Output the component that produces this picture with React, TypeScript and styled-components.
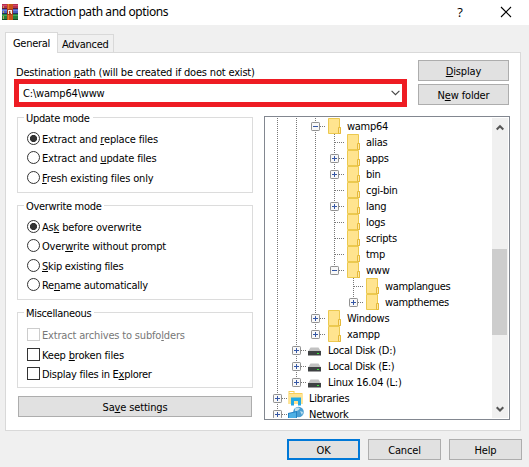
import React from 'react';
import styled, { createGlobalStyle, css } from 'styled-components';

const Global = createGlobalStyle`
  *, *::before, *::after { box-sizing: border-box; }
  body { margin: 0; overflow: hidden; background: #f0f0f0; }
`;

const Dialog = styled.div`
  width: 529px;
  height: 467px;
  display: flex;
  flex-direction: column;
  background: #f0f0f0;
  color: #000;
  font: 11px/13px 'DejaVu Sans Condensed', 'DejaVu Sans', sans-serif;
  letter-spacing: -0.18px;
  white-space: pre;
`;

const TitleBar = styled.header`
  height: 25px;
  flex: none;
  display: flex;
  align-items: center;
  padding: 0 17px 1px 2px;
  background: #fff;
`;

const Title = styled.h1`
  flex: 1;
  margin: 0 0 0 5px;
  font: 12px/16px 'Noto Sans', 'Open Sans', sans-serif;
  letter-spacing: -0.4px;
`;

const HelpMark = styled.span`
  width: 10px;
  margin-right: 35px;
  text-align: center;
  font: 13px/16px 'Open Sans', sans-serif;
`;

const Tabs = styled.nav`
  height: 27px;
  flex: none;
  display: flex;
  align-items: flex-end;
  padding-left: 5px;
`;

const Tab = styled.div<{ $active?: boolean }>`
  display: flex;
  border: 1px solid #d9d9d9;
  border-bottom: 0;
  letter-spacing: -0.3px;
  ${p =>
    p.$active
      ? css`
          width: 53px;
          height: 21px;
          margin-bottom: -1px;
          padding: 4px 0 0 7px;
          background: #fff;
          z-index: 1;
        `
      : css`
          width: 56px;
          height: 18px;
          padding: 3px 0 0 4px;
          border-left: 0;
        `}
`;

const Panel = styled.main`
  width: 516px;
  height: 379px;
  flex: none;
  display: flex;
  flex-direction: column;
  margin-left: 5px;
  padding: 8px 10px 0 8px;
  background: #fff;
  border: 1px solid #d9d9d9;
`;

const PathArea = styled.section`
  display: flex;
  justify-content: space-between;
  height: 55px;
  flex: none;
`;

const PathField = styled.div`
  width: 393px;
  padding-top: 5px;
`;

const PathLabel = styled.div`
  height: 13px;
  margin-left: 2px;
`;

const Combo = styled.div`
  height: 28px;
  display: flex;
  align-items: center;
  justify-content: space-between;
  padding: 0 2px 0 4px;
  border: 5px solid #ee1c23;
`;

const SideButtons = styled.div`
  display: flex;
  flex-direction: column;
  gap: 3px;
  width: 91px;
  margin: -1px 1px 0 0;
`;

const Button = styled.button<{ $primary?: boolean }>`
  height: 21px;
  display: flex;
  justify-content: center;
  align-items: center;
  padding: 1px 0 0;
  background: #e1e1e1;
  border: ${p => (p.$primary ? '2px solid #0078d7' : '1px solid #adadad')};
  font: inherit;
  color: inherit;
  letter-spacing: -0.15px;
`;

const Columns = styled.div`
  display: flex;
  justify-content: space-between;
  align-items: flex-start;
  padding-left: 3px;
`;

const Options = styled.div`
  width: 236px;
  display: flex;
  flex-direction: column;
  margin-top: -5px;
`;

const Group = styled.fieldset<{ $height: number }>`
  width: 236px;
  height: ${p => p.$height}px;
  min-width: 0;
  display: flex;
  flex-direction: column;
  margin: 0 0 6px;
  padding: 0 0 0 9px;
  border: 1px solid #dcdcdc;
`;

const Legend = styled.legend`
  height: 13px;
  margin-left: -3px;
  padding: 0 3px 0 2px;
  line-height: 15px;
  letter-spacing: -0.32px;
`;

const Choice = styled.label<{ $gap: number; $disabled?: boolean }>`
  height: 13px;
  display: flex;
  align-items: flex-start;
  gap: 2px;
  margin-top: ${p => p.$gap}px;
  color: ${p => (p.$disabled ? '#777' : '#000')};
`;

const ChoiceText = styled.span<{ $tight?: boolean }>`
  line-height: 15px;
  letter-spacing: ${p => (p.$tight ? -0.27 : -0.17)}px;
`;

const Radio = styled.span<{ $on?: boolean }>`
  width: 13px;
  height: 13px;
  flex: none;
  border: 1px solid #333;
  border-radius: 50%;
  background: ${p => (p.$on ? 'radial-gradient(circle, #333 3.2px, #fff 3.9px)' : '#fff')};
`;

const Check = styled.span<{ $disabled?: boolean }>`
  width: 13px;
  height: 13px;
  flex: none;
  border: 1px solid ${p => (p.$disabled ? '#ccc' : '#333')};
`;

const SaveButton = styled(Button)`
  width: 234px;
  margin: 2px 0 0 1px;
`;

const TreeBox = styled.div`
  width: 246px;
  height: 304px;
  display: flex;
  justify-content: space-between;
  padding: 1px;
  border: 1px solid #828790;
`;

const TreeList = styled.div`
  flex: 1;
  height: 300px;
  overflow: hidden;
  padding-left: 2px;
`;

const TreeRow = styled.div`
  height: 16px;
  display: flex;
  align-items: flex-start;
`;

const RowLabel = styled.span<{ $tight?: boolean }>`
  height: 12px;
  margin: 2px 0 0 3px;
  line-height: 13px;
  letter-spacing: ${p => (p.$tight ? -0.34 : -0.27)}px;
`;

const Scrollbar = styled.div`
  width: 16px;
  height: 300px;
  display: flex;
  flex-direction: column;
  align-items: flex-start;
  background: #f0f0f0;
`;

const Thumb = styled.div`
  width: 15px;
  height: 86px;
  background: #cdcdcd;
`;

const ArrowCell = styled.div<{ $height: number; $end?: boolean }>`
  width: 16px;
  height: ${p => p.$height}px;
  display: flex;
  justify-content: center;
  align-items: ${p => (p.$end ? 'flex-end' : 'flex-start')};
  padding: 6px 0 5px;
`;

const Footer = styled.footer`
  display: flex;
  justify-content: flex-end;
  gap: 8px;
  padding: 8px 7px 0 0;
`;

const FooterButton = styled(Button)`
  width: 73px;
`;

const WinrarLogo = () => (
  <svg width="16" height="16" viewBox="0 0 16 16" shapeRendering="crispEdges">
    <rect y="0" width="16" height="5" fill="#b5304f" />
    <rect y="1" width="16" height="1" fill="#d8476a" />
    <rect y="4" width="16" height="1" fill="#5c1c33" />
    <rect y="5" width="16" height="5" fill="#4a5fc0" />
    <rect y="6" width="16" height="1" fill="#6a84e0" />
    <rect y="9" width="16" height="1" fill="#252e63" />
    <rect y="10" width="16" height="6" fill="#25803c" />
    <rect y="11" width="16" height="1" fill="#45ab55" />
    <rect y="15" width="16" height="1" fill="#114a20" />
    <path d="M1.5 2v2M1.5 7v2M1.5 12v3" stroke="#b9a35a" />
    <rect x="5" width="6" height="16" fill="#c8541c" />
    <rect x="6" width="1" height="16" fill="#e67a30" />
    <rect x="5" y="5" width="6" height="6" fill="#a83c20" />
    <path d="M6.5 10V6.5h3V10" fill="none" stroke="#f6f0e4" />
    <path d="M8 7v2" stroke="#d9b98a" />
  </svg>
);

const CloseIcon = () => (
  <svg width="12" height="12" viewBox="0 0 12 12">
    <path d="M1 1l10 10M11 1L1 11" stroke="#000" strokeWidth="1.1" />
  </svg>
);

const ComboArrow = () => (
  <svg width="9" height="6" viewBox="0 0 9 6">
    <path d="M.6 .8l3.9 3.9L8.4 .8" fill="none" stroke="#444" strokeWidth="1.1" />
  </svg>
);

const ScrollArrow = ({ down }: { down?: boolean }) => (
  <svg width="8" height="7" viewBox="0 0 8 7">
    <path d={down ? 'M.7 1.2L4 4.5l3.3-3.3' : 'M.7 5.5L4 2.2l3.3 3.3'} fill="none" stroke="#555" strokeWidth="2" />
  </svg>
);

type IconKind = 'folder' | 'disk' | 'library' | 'network';

const NodeIcon = ({ kind }: { kind: IconKind }) => (
  <svg width="19" height="16" viewBox="0 0 19 16">
    {kind === 'folder' && (
      <g>
        <path d="M3.5 .5h11v9h1v6h-12z" fill="#ffe48f" stroke="#ecc94f" />
        <path d="M13.5 15.5v-6h2v6z" fill="#ffe9a3" stroke="#e5b93a" />
      </g>
    )}
    {kind === 'disk' && (
      <g>
        <path d="M4.5 5.5h8l2.5 4H2z" fill="#c2c2c2" />
        <rect x="2" y="9" width="13" height="4.5" fill="#3e4143" />
        <rect x="11" y="11" width="2" height="1" fill="#39e639" />
      </g>
    )}
    {kind === 'library' && (
      <g>
        <path d="M1.5 1h6v2h8v11h-14z" fill="#f7cf59" />
        <rect x="2.5" y="2" width="4" height="1" fill="#fff" />
        <path d="M1.5 4h14v10h-14z" fill="#ffe391" />
        <path d="M4 15.5V7.5h10v8h-3v-4.5H7v4.5z" fill="#21a9e4" />
      </g>
    )}
    {kind === 'network' && (
      <g>
        <circle cx="11.5" cy="6" r="5.3" fill="#4b9fd2" />
        <path d="M8 2.5q3-2 5 0l-2 2-3 1zM13 5l3 1-1 3z" fill="#bfe0ee" />
        <path d="M1 7l9-2v8l-9 1.5z" fill="#2382c4" />
        <path d="M2 7.7l7-1.5v5.9l-7 1.2z" fill="#4eb0e4" />
        <path d="M4 15l5-2.5 3 2" fill="none" stroke="#2d6e9e" />
      </g>
    )}
  </svg>
);

const dots = { stroke: '#777', strokeDasharray: '1 1', fill: 'none' };

const Guide = ({ visible }: { visible: boolean }) => (
  <svg width="19" height="16">{visible && <path d="M9.5 0V16" {...dots} />}</svg>
);

const Junction = ({ box, last }: { box?: '+' | '-'; last?: boolean }) => (
  <svg width="19" height="16">
    <path d={last ? 'M9.5 0V8' : 'M9.5 0V16'} {...dots} />
    <path d="M10 8.5H19" {...dots} />
    {box && (
      <g>
        <rect x="5.5" y="4.5" width="8" height="8" rx=".7" fill="#f8f8f8" stroke="#919191" />
        <path d={box === '+' ? 'M7 8.5h5M9.5 6v5' : 'M7 8.5h5'} stroke="#3557a5" />
      </g>
    )}
  </svg>
);

interface TreeNode {
  name: string;
  guides: boolean[];
  box?: '+' | '-';
  last?: boolean;
  kind?: IconKind;
  tight?: boolean;
}

const two = [true, true];
const three = [true, true, true];
const four = [true, true, true, false];

const nodes: TreeNode[] = [
  { name: 'wamp64', guides: two, box: '-' },
  { name: 'alias', guides: three },
  { name: 'apps', guides: three, box: '+' },
  { name: 'bin', guides: three, box: '+' },
  { name: 'cgi-bin', guides: three },
  { name: 'lang', guides: three, box: '+' },
  { name: 'logs', guides: three },
  { name: 'scripts', guides: three },
  { name: 'tmp', guides: three },
  { name: 'www', guides: three, box: '-', last: true },
  { name: 'wamplangues', guides: four, tight: true },
  { name: 'wampthemes', guides: four, box: '+', last: true, tight: true },
  { name: 'Windows', guides: two, box: '+' },
  { name: 'xampp', guides: two, box: '+', last: true },
  { name: 'Local Disk (D:)', guides: [true], box: '+', kind: 'disk' },
  { name: 'Local Disk (E:)', guides: [true], box: '+', kind: 'disk' },
  { name: 'Linux 16.04 (L:)', guides: [true], box: '+', last: true, kind: 'disk' },
  { name: 'Libraries', guides: [], box: '+', kind: 'library' },
  { name: 'Network', guides: [], box: '+', kind: 'network' },
];

export default function App() {
  return (
    <Dialog>
      <Global />
      <TitleBar>
        <WinrarLogo />
        <Title>Extraction path and options</Title>
        <HelpMark>?</HelpMark>
        <CloseIcon />
      </TitleBar>
      <Tabs>
        <Tab $active>General</Tab>
        <Tab>Advanced</Tab>
      </Tabs>
      <Panel>
        <PathArea>
          <PathField>
            <PathLabel>Destination <u>p</u>ath (will be created if does not exist)</PathLabel>
            <Combo>
              C:\wamp64\www
              <ComboArrow />
            </Combo>
          </PathField>
          <SideButtons>
            <Button><u>D</u>isplay</Button>
            <Button>N<u>e</u>w folder</Button>
          </SideButtons>
        </PathArea>
        <Columns>
          <Options>
            <Group $height={82}>
              <Legend>Update mode</Legend>
              <Choice $gap={8}><Radio $on /><ChoiceText>Extract and <u>r</u>eplace files</ChoiceText></Choice>
              <Choice $gap={6}><Radio /><ChoiceText>Extract and <u>u</u>pdate files</ChoiceText></Choice>
              <Choice $gap={7}><Radio /><ChoiceText><u>F</u>resh existing files only</ChoiceText></Choice>
            </Group>
            <Group $height={101}>
              <Legend>Overwrite mode</Legend>
              <Choice $gap={8}><Radio $on /><ChoiceText>As<u>k</u> before overwrite</ChoiceText></Choice>
              <Choice $gap={6}><Radio /><ChoiceText>Over<u>w</u>rite without prompt</ChoiceText></Choice>
              <Choice $gap={7}><Radio /><ChoiceText $tight><u>S</u>kip existing files</ChoiceText></Choice>
              <Choice $gap={6}><Radio /><ChoiceText $tight>Re<u>n</u>ame automatically</ChoiceText></Choice>
            </Group>
            <Group $height={82}>
              <Legend>Miscellaneous</Legend>
              <Choice $gap={9} $disabled><Check $disabled /><ChoiceText>Extract archives to subfo<u>l</u>ders</ChoiceText></Choice>
              <Choice $gap={7}><Check /><ChoiceText>Keep <u>b</u>roken files</ChoiceText></Choice>
              <Choice $gap={6}><Check /><ChoiceText $tight>Display files in E<u>x</u>plorer</ChoiceText></Choice>
            </Group>
            <SaveButton>Sa<u>v</u>e settings</SaveButton>
          </Options>
          <TreeBox>
            <TreeList>
              {nodes.map(n => (
                <TreeRow key={n.name}>
                  {n.guides.map((visible, i) => <Guide key={i} visible={visible} />)}
                  <Junction box={n.box} last={n.last} />
                  <NodeIcon kind={n.kind ?? 'folder'} />
                  <RowLabel $tight={n.tight}>{n.name}</RowLabel>
                </TreeRow>
              ))}
            </TreeList>
            <Scrollbar>
              <ArrowCell $height={131}><ScrollArrow /></ArrowCell>
              <Thumb />
              <ArrowCell $height={83} $end><ScrollArrow down /></ArrowCell>
            </Scrollbar>
          </TreeBox>
        </Columns>
      </Panel>
      <Footer>
        <FooterButton $primary>OK</FooterButton>
        <FooterButton>Cancel</FooterButton>
        <FooterButton>Help</FooterButton>
      </Footer>
    </Dialog>
  );
}
